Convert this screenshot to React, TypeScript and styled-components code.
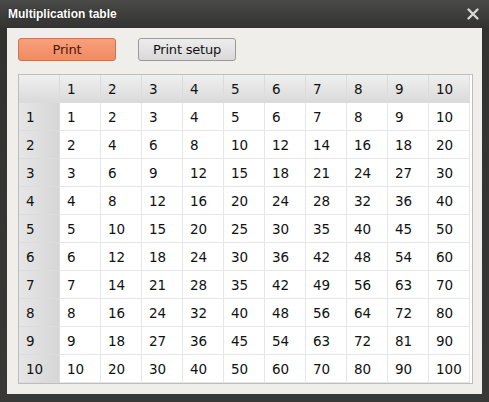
import * as React from "react";
import styled, { createGlobalStyle } from "styled-components";

const GlobalStyle = createGlobalStyle`
  html, body {
    margin: 0;
    padding: 0;
    background: #3a3a38;
  }
  body {
    font-family: "DejaVu Sans", "Liberation Sans", sans-serif;
  }
`;

const Window = styled.div`
  width: 489px;
  height: 402px;
  box-sizing: border-box;
  background: linear-gradient(#4a4a48, #323230 28px, #383836);
  padding: 0 7px 8px 7px;
  display: flex;
  flex-direction: column;
`;

const TitleBar = styled.div`
  height: 28px;
  display: flex;
  align-items: center;
  justify-content: space-between;
  padding: 0 0 0 1px;
`;

const Title = styled.span`
  color: #fff;
  font-family: "Liberation Sans", Arial, sans-serif;
  font-weight: bold;
  font-size: 12px;
  text-shadow: 0 0 2px rgba(0, 0, 0, 0.6);
`;

const CloseBtn = styled.span`
  width: 14px;
  height: 14px;
  margin-right: 2px;
  display: flex;
`;

const Body = styled.div`
  flex: 1;
  background: #f0eeeb;
  padding: 10px 11px 10px 11px;
  display: flex;
  flex-direction: column;
`;

const Toolbar = styled.div`
  display: flex;
  gap: 22px;
  height: 23px;
  margin-bottom: 13px;
`;

const Button = styled.button<{ $primary?: boolean }>`
  width: 98px;
  height: 23px;
  border-radius: 3px;
  font-family: "DejaVu Sans", sans-serif;
  font-size: 13px;
  letter-spacing: -0.2px;
  padding: 0;
  border: 1px solid ${(p) => (p.$primary ? "#c77653" : "#9a9a9a")};
  color: ${(p) => (p.$primary ? "#4a1408" : "#111")};
  background: ${(p) =>
    p.$primary
      ? "linear-gradient(#f7a07c, #f28a62)"
      : "linear-gradient(#ededed, #d9d9d9)"};
`;

const Grid = styled.div`
  width: 453px;
  display: grid;
  grid-template-columns: repeat(11, 41px);
  grid-auto-rows: 28px;
  border: 1px solid #bdbdbd;
  background: #fff;
`;

const Cell = styled.div<{ $kind: "corner" | "top" | "side" | "body" }>`
  display: flex;
  align-items: center;
  padding-left: 7px;
  font-size: 13.5px;
  color: #111;
  box-sizing: border-box;
  border-right: 1px solid
    ${(p) => (p.$kind === "body" ? "#e6e6e6" : "#dcdcdc")};
  border-bottom: 1px solid
    ${(p) => (p.$kind === "body" ? "#e6e6e6" : "#dcdcdc")};
  background: ${(p) =>
    p.$kind === "body"
      ? "#fff"
      : p.$kind === "side"
        ? "linear-gradient(90deg, #e6e6e6, #d6d6d6)"
        : "linear-gradient(#f0f0f0, #dadada)"};
`;

export default function App() {
  const nums = Array.from({ length: 10 }, (_, i) => i + 1);
  return (
    <>
      <GlobalStyle />
      <Window>
        <TitleBar>
          <Title>Multiplication table</Title>
          <CloseBtn>
            <svg width="14" height="14" viewBox="0 0 14 14">
              <path
                d="M2.5 2.5 L11.5 11.5 M11.5 2.5 L2.5 11.5"
                stroke="#d8d8d8"
                strokeWidth="2.4"
                strokeLinecap="round"
              />
            </svg>
          </CloseBtn>
        </TitleBar>
        <Body>
          <Toolbar>
            <Button $primary>Print</Button>
            <Button>Print setup</Button>
          </Toolbar>
          <Grid>
            <Cell $kind="corner" />
            {nums.map((n) => (
              <Cell $kind="top" key={"h" + n}>
                {n}
              </Cell>
            ))}
            {nums.map((r) => (
              <React.Fragment key={"r" + r}>
                <Cell $kind="side">{r}</Cell>
                {nums.map((c) => (
                  <Cell $kind="body" key={c}>
                    {r * c}
                  </Cell>
                ))}
              </React.Fragment>
            ))}
          </Grid>
        </Body>
      </Window>
    </>
  );
}
